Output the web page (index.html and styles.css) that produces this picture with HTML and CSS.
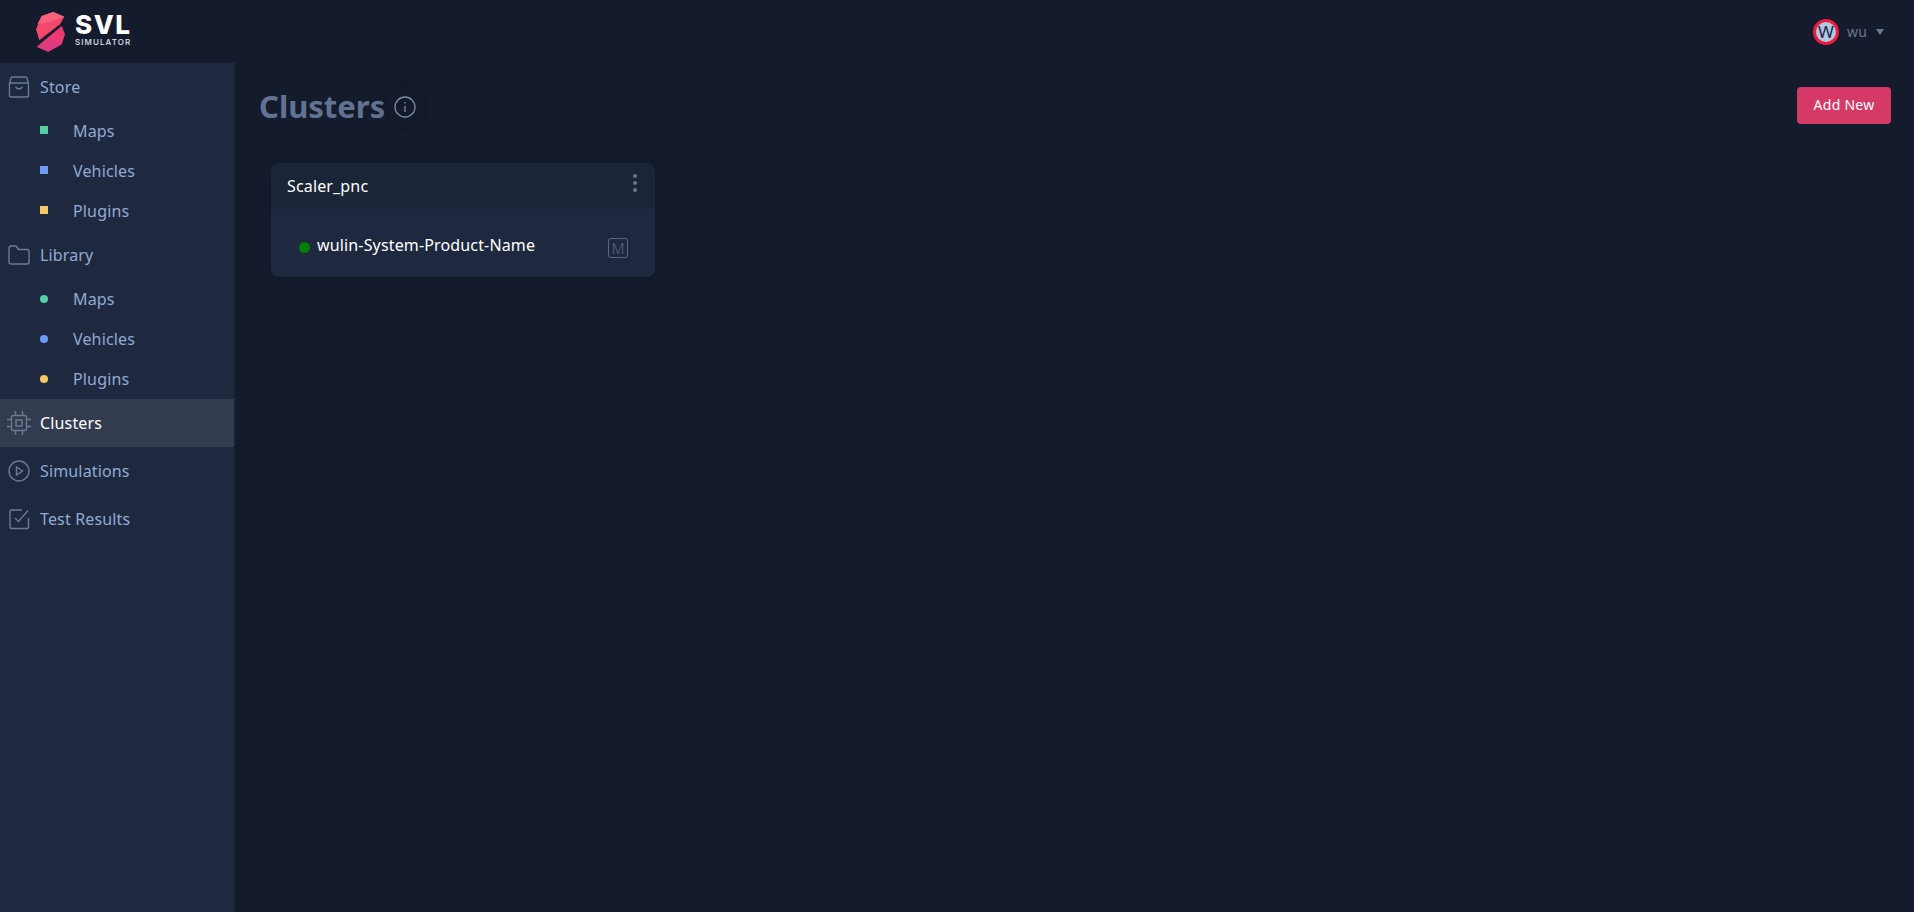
FILE: index.html
```html
<!DOCTYPE html>
<html lang="en">
  <head>
    <meta charset="UTF-8" />
    <meta name="viewport" content="width=device-width, initial-scale=1.0" />
    <title>Clusters</title>
    <link rel="stylesheet" href="styles.css">
  </head>
  <body>
    <header class="topbar">
      <div class="logo">
        <svg class="logo-mark" width="30" height="42" viewBox="0 0 30 42">
          <polygon points="5.7,5 17.3,1 28.3,5.7 24,13.3 3.3,29.3 0,18.3" fill="#f4476c" />
          <polygon points="5.7,5 17.3,1 28.3,5.7 13,11 1.5,13" fill="#f8617a" />
          <polygon points="25.7,15 29,23.3 25.7,33.3 12.3,40.7 0.7,35.7" fill="#ee3a72" />
          <polygon points="25.7,33.3 12.3,40.7 0.7,35.7 16,29" fill="#dc3b80" />
        </svg>
        <div class="logo-text">
          <div class="logo-name">SVL</div>
          <div class="logo-sub">SIMULATOR</div>
        </div>
      </div>
      <div class="user">
        <div class="avatar">W</div>
        <span class="user-name">wu</span>
        <span class="caret"></span>
      </div>
    </header>
    <div class="layout">
      <nav class="sidebar">
        <a class="nav-item">
          <svg class="nav-icon" viewBox="0 0 22 22" fill="none">
            <path d="M1.5 7.5 L3 2 Q3.3 1 4.5 1 H17.5 Q18.7 1 19 2 L20.5 7.5 V19.5 Q20.5 21 19 21 H3 Q1.5 21 1.5 19.5 Z M1.5 7 H20.5 M7.5 11 Q11 15 14.5 11" />
          </svg>
          Store
        </a>
        <a class="sub-item"><span class="mark green"></span>Maps</a>
        <a class="sub-item"><span class="mark blue"></span>Vehicles</a>
        <a class="sub-item"><span class="mark yellow"></span>Plugins</a>
        <a class="nav-item">
          <svg class="nav-icon" viewBox="0 0 22 22" fill="none">
            <path d="M1 5 Q1 2 3 2 H8 L10.5 5.5 H19 Q21 5.5 21 7.5 V18 Q21 20 19 20 H3 Q1 20 1 18 Z" />
          </svg>
          Library
        </a>
        <a class="sub-item"><span class="mark round green"></span>Maps</a>
        <a class="sub-item"><span class="mark round blue"></span>Vehicles</a>
        <a class="sub-item"><span class="mark round yellow"></span>Plugins</a>
        <a class="nav-item active">
          <svg class="nav-icon" viewBox="0 0 22 22" fill="none">
            <rect x="3.5" y="3.5" width="15" height="15" rx="2" />
            <rect x="8" y="8" width="6" height="6" />
            <path d="M7.5 -1 V3 M14.5 -1 V3 M7.5 19 V23 M14.5 19 V23 M-1 7.5 H3 M-1 14.5 H3 M19 7.5 H23 M19 14.5 H23" />
          </svg>
          Clusters
        </a>
        <a class="nav-item">
          <svg class="nav-icon" viewBox="0 0 22 22" fill="none">
            <circle cx="11" cy="11" r="10" />
            <path d="M8.5 7 L14.5 11 L8.5 15 Z" />
          </svg>
          Simulations
        </a>
        <a class="nav-item">
          <svg class="nav-icon" viewBox="0 0 22 22" fill="none">
            <path d="M14 2 H3.5 Q2 2 2 3.5 V19 Q2 20.5 3.5 20.5 H19 Q20.5 20.5 20.5 19 V10 M7 10 L10.5 13.5 L20 2.5" />
          </svg>
          Test Results
        </a>
      </nav>
      <main class="content">
        <div class="page-head">
          <div class="page-title">
            <h1>Clusters</h1>
            <span class="info">
              <svg width="22" height="22" viewBox="0 0 22 22" fill="none">
                <circle cx="11" cy="11" r="10" />
                <path d="M11 10 V16 M11 6 V7.5" />
              </svg>
            </span>
          </div>
          <button class="add-btn">Add New</button>
        </div>
        <section class="card">
          <div class="card-head">
            <span>Scaler_pnc</span>
            <span class="dots"><i></i><i></i><i></i></span>
          </div>
          <div class="card-body">
            <span class="status"></span>
            <span class="node-name">wulin-System-Product-Name</span>
            <span class="node-badge">M</span>
          </div>
        </section>
      </main>
    </div>
  </body>
</html>
```

FILE: styles.css
```css
* {
  box-sizing: border-box;
}
body {
  margin: 0;
  height: 912px;
  overflow: hidden;
  font-family: "Noto Sans", sans-serif;
  font-size: 16px;
  letter-spacing: 0.15px;
  background: #141b2d;
  color: #fff;
}
.topbar {
  height: 63px;
  display: flex;
  align-items: center;
  justify-content: space-between;
  padding: 0 30px 0 36px;
  background: #141b2d;
}
.logo {
  display: flex;
  align-items: center;
  gap: 9px;
}
.logo-mark {
  display: block;
}
.logo-text {
  display: flex;
  flex-direction: column;
  align-items: flex-start;
  margin-top: -1px;
}
.logo-name {
  font-family: Inter, sans-serif;
  font-weight: 800;
  font-size: 26px;
  line-height: 22px;
  letter-spacing: 1.5px;
}
.logo-sub {
  font-family: Inter, sans-serif;
  font-weight: 500;
  font-size: 8px;
  line-height: 12px;
  letter-spacing: 1.1px;
  color: #e0e3ea;
}
.user {
  display: flex;
  align-items: center;
}
.avatar {
  width: 26px;
  height: 26px;
  border-radius: 50%;
  border: 3px solid #ee1c3c;
  background: #b4c6e6;
  color: #1d2940;
  font-size: 17px;
  line-height: 20px;
  text-align: center;
}
.user-name {
  margin-left: 8px;
  font-size: 14px;
  color: #6a778c;
}
.caret {
  margin-left: 9px;
  border-left: 4px solid transparent;
  border-right: 4px solid transparent;
  border-top: 6px solid #6a778c;
}
.layout {
  display: flex;
  height: 849px;
}
.sidebar {
  width: 235px;
  flex: none;
  background: #1e293f;
  border-right: 1px solid #1b2539;
}
.nav-item {
  height: 48px;
  display: flex;
  align-items: center;
  padding-left: 8px;
  color: #93aad4;
}
.nav-item.active {
  background: #333c4f;
  color: #fff;
}
.nav-icon {
  width: 22px;
  height: 22px;
  margin-right: 10px;
  flex: none;
  overflow: visible;
  stroke: #6b7a94;
  stroke-width: 1.4;
}
.sub-item {
  height: 40px;
  display: flex;
  align-items: center;
  padding-left: 40px;
  color: #93aad4;
}
.mark {
  width: 8px;
  height: 8px;
  margin-right: 25px;
  margin-top: -2px;
}
.mark.round {
  border-radius: 50%;
  margin-top: 0;
}
.green {
  background: #54cfa3;
}
.blue {
  background: #6e9bf5;
}
.yellow {
  background: #f6c762;
}
.content {
  flex: 1;
  padding: 0 23px 0 25px;
}
.page-head {
  display: flex;
  align-items: flex-start;
  justify-content: space-between;
  padding-top: 24px;
}
.page-title {
  display: flex;
  align-items: center;
  height: 40px;
}
.page-title h1 {
  margin: -2px 0 0 -1px;
  font-size: 31px;
  font-weight: 700;
  letter-spacing: 0;
  color: #627391;
}
.info {
  width: 40px;
  height: 40px;
  display: flex;
  align-items: center;
  justify-content: center;
  border-radius: 50%;
  background: #131a2b;
  box-shadow: 0 0 6px rgba(10, 14, 25, 0.4);
}
.info svg {
  stroke: #7d8ca5;
  stroke-width: 1.3;
}
.add-btn {
  width: 94px;
  height: 37px;
  padding: 0 0 2px;
  border: none;
  border-radius: 4px;
  background: #d53a67;
  color: #fff;
  font-family: inherit;
  font-size: 14px;
  letter-spacing: 0.25px;
}
.card {
  width: 384px;
  margin: 36px 0 0 11px;
  border-radius: 8px;
  overflow: hidden;
  background: #1e293f;
  box-shadow: 0 4px 12px rgba(0, 0, 0, 0.1);
}
.card-head {
  height: 46px;
  display: flex;
  align-items: center;
  justify-content: space-between;
  padding: 0 18px 0 16px;
  background: #1b2538;
}
.dots {
  display: flex;
  flex-direction: column;
  gap: 3px;
  margin-top: -6px;
}
.dots i {
  width: 4px;
  height: 4px;
  border-radius: 50%;
  background: #6a778c;
}
.card-body {
  height: 68px;
  display: flex;
  align-items: center;
  padding: 0 27px 0 28px;
}
.status {
  width: 11px;
  height: 11px;
  margin-top: 8px;
  border-radius: 50%;
  background: #008000;
}
.node-name {
  margin-left: 7px;
  margin-top: 4px;
}
.node-badge {
  width: 20px;
  height: 20px;
  margin-left: auto;
  margin-top: 10px;
  border: 1px solid #5a677f;
  border-radius: 3px;
  color: #5a677f;
  font-size: 15px;
  font-weight: 300;
  line-height: 18px;
  text-align: center;
}
```
